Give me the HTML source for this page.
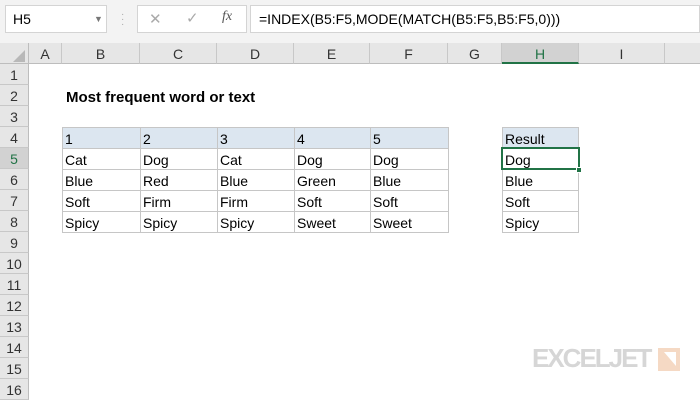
<!DOCTYPE html>
<html><head><style>
*{margin:0;padding:0;box-sizing:border-box}
body{width:700px;height:400px;overflow:hidden;background:#fff;font-family:"Liberation Sans",Calibri,sans-serif;position:relative}
.abs{position:absolute}
.top{left:0;top:0;width:700px;height:43px;background:#f3f3f3}
.box{background:#fff;border:1px solid #d4d4d4}
.ch{top:43px;height:21px;background:#e6e6e6;border-right:1px solid #c8c8c8;border-bottom:1px solid #bdbdbd;font-size:14px;color:#333;text-align:center;line-height:22px}
.rh{left:0;width:29px;height:21px;background:#e6e6e6;border-bottom:1px solid #c8c8c8;border-right:1px solid #bdbdbd;font-size:14px;color:#333;text-align:center;line-height:23px}
.c{height:21px;border-right:1px solid #c6c6c6;border-bottom:1px solid #c6c6c6;font-size:14px;line-height:22px;padding-left:2px;color:#000}
.hd{background:#dce6f0}
</style></head><body>
<div class="abs top"></div>
<div class="abs box" style="left:5px;top:5px;width:102px;height:28px;font-size:14px;line-height:26px;padding-left:7px">H5<span class="abs" style="left:88px;top:0;font-size:9px;color:#777">▼</span></div>
<div class="abs" style="left:121px;top:12px;color:#aaa;font-size:10px;line-height:5px">·<br>·<br>·</div>
<div class="abs box" style="left:137px;top:5px;width:110px;height:28px"></div>
<div class="abs" style="left:149px;top:10px;color:#aaa;font-size:15px">✕</div>
<div class="abs" style="left:186px;top:9px;color:#aaa;font-size:15px">✓</div>
<div class="abs" style="left:222px;top:9px;color:#555;font-size:14px;font-style:italic;font-family:'Liberation Serif',serif">fx</div>
<div class="abs box" style="left:250px;top:5px;width:450px;height:28px;font-size:14px;line-height:26px;padding-left:8px">=INDEX(B5:F5,MODE(MATCH(B5:F5,B5:F5,0)))</div>
<div class="abs" style="left:0;top:43px;width:29px;height:21px;background:#e6e6e6;border-right:1px solid #bdbdbd;border-bottom:1px solid #bdbdbd"></div>
<div class="abs" style="left:13px;top:50px;width:0;height:0;border-left:12px solid transparent;border-bottom:12px solid #b8b8b8"></div>
<div class="abs ch" style="left:29px;width:33px">A</div>
<div class="abs ch" style="left:62px;width:78px">B</div>
<div class="abs ch" style="left:140px;width:77px">C</div>
<div class="abs ch" style="left:217px;width:77px">D</div>
<div class="abs ch" style="left:294px;width:76px">E</div>
<div class="abs ch" style="left:370px;width:78px">F</div>
<div class="abs ch" style="left:448px;width:54px">G</div>
<div class="abs ch" style="left:502px;width:77px;background:#d2d2d2;color:#217346;border-bottom:2px solid #217346">H</div>
<div class="abs ch" style="left:579px;width:86px">I</div>
<div class="abs ch" style="left:665px;width:40px"></div>
<div class="abs rh" style="top:64px">1</div>
<div class="abs rh" style="top:85px">2</div>
<div class="abs rh" style="top:106px">3</div>
<div class="abs rh" style="top:127px">4</div>
<div class="abs rh" style="top:148px;background:#d2d2d2;color:#217346">5</div>
<div class="abs rh" style="top:169px">6</div>
<div class="abs rh" style="top:190px">7</div>
<div class="abs rh" style="top:211px">8</div>
<div class="abs rh" style="top:232px">9</div>
<div class="abs rh" style="top:253px">10</div>
<div class="abs rh" style="top:274px">11</div>
<div class="abs rh" style="top:295px">12</div>
<div class="abs rh" style="top:316px">13</div>
<div class="abs rh" style="top:337px">14</div>
<div class="abs rh" style="top:358px">15</div>
<div class="abs rh" style="top:379px">16</div>
<div class="abs" style="left:66px;top:89px;font-size:15px;font-weight:bold">Most frequent word or text</div>
<div class="abs" style="left:62px;top:127px;border-left:1px solid #c6c6c6;border-top:1px solid #c6c6c6;display:grid;grid-template-columns:78px 77px 77px 76px 78px">
<div class="c hd">1</div><div class="c hd">2</div><div class="c hd">3</div><div class="c hd">4</div><div class="c hd">5</div>
<div class="c">Cat</div><div class="c">Dog</div><div class="c">Cat</div><div class="c">Dog</div><div class="c">Dog</div>
<div class="c">Blue</div><div class="c">Red</div><div class="c">Blue</div><div class="c">Green</div><div class="c">Blue</div>
<div class="c">Soft</div><div class="c">Firm</div><div class="c">Firm</div><div class="c">Soft</div><div class="c">Soft</div>
<div class="c">Spicy</div><div class="c">Spicy</div><div class="c">Spicy</div><div class="c">Sweet</div><div class="c">Sweet</div>
</div>
<div class="abs" style="left:502px;top:127px;border-left:1px solid #c6c6c6;border-top:1px solid #c6c6c6;width:77px">
<div class="c hd">Result</div><div class="c">Dog</div><div class="c">Blue</div><div class="c">Soft</div><div class="c">Spicy</div>
</div>
<div class="abs" style="left:501px;top:147px;width:79px;height:23px;border:2px solid #217346"></div>
<div class="abs" style="left:576px;top:167px;width:6px;height:6px;background:#217346;border:1px solid #fff"></div>
<div class="abs" style="left:532px;top:343px;font-size:26px;font-weight:bold;color:#d6d6d6;letter-spacing:-2px">EXCELJET</div>
<div class="abs" style="left:658px;top:348px;width:22px;height:23px;background:#f5d9c4"></div>
<div class="abs" style="left:664px;top:352px;width:0;height:0;border-right:12px solid #fff;border-bottom:14px solid transparent"></div>
</body></html>
